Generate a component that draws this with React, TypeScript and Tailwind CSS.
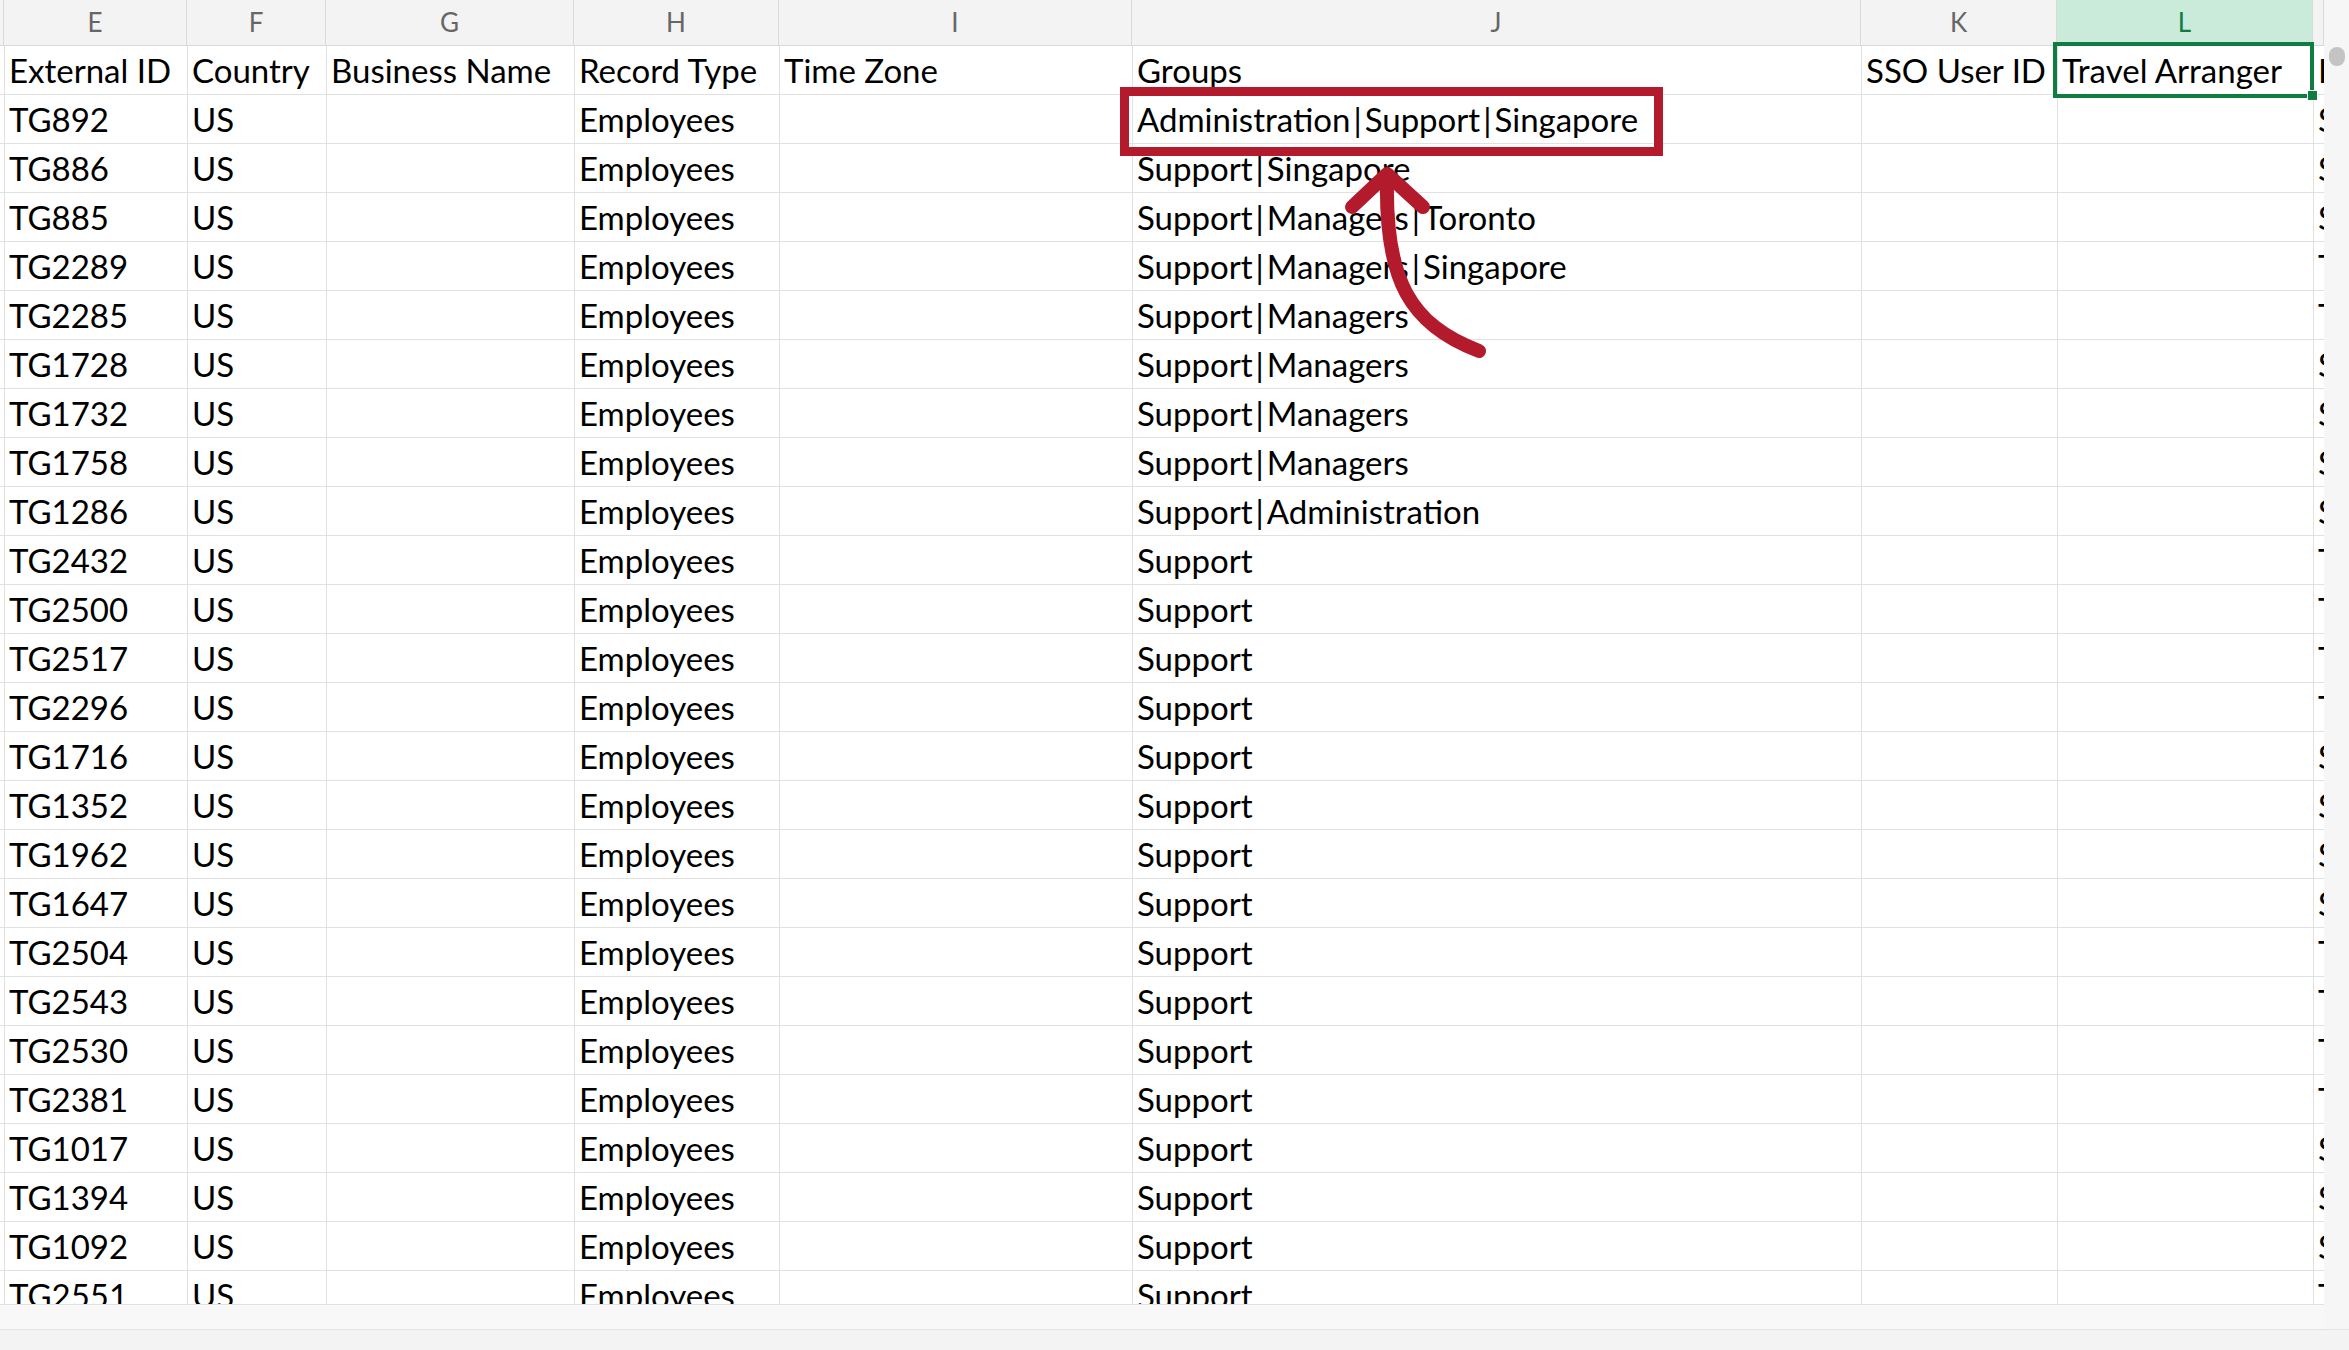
import { Fragment } from "react";

const cols = [
  { key: "D", w: "w-[4px]" },
  { key: "E", w: "w-[183px]" },
  { key: "F", w: "w-[139px]" },
  { key: "G", w: "w-[248px]" },
  { key: "H", w: "w-[205px]" },
  { key: "I", w: "w-[353px]" },
  { key: "J", w: "w-[729px]" },
  { key: "K", w: "w-[196px]" },
  { key: "L", w: "w-[256px]" },
  { key: "M", w: "w-[11px]" },
];

const names: Record<string, string> = {
  D: "",
  E: "External ID",
  F: "Country",
  G: "Business Name",
  H: "Record Type",
  I: "Time Zone",
  J: "Groups",
  K: "SSO User ID",
  L: "Travel Arranger",
  M: "Is",
};

// id, groups, first letter of the clipped M column
const rows: [string, string, string][] = [
  ["TG892", "Administration|Support|Singapore", "S"],
  ["TG886", "Support|Singapore", "S"],
  ["TG885", "Support|Managers|Toronto", "S"],
  ["TG2289", "Support|Managers|Singapore", "T"],
  ["TG2285", "Support|Managers", "T"],
  ["TG1728", "Support|Managers", "S"],
  ["TG1732", "Support|Managers", "S"],
  ["TG1758", "Support|Managers", "S"],
  ["TG1286", "Support|Administration", "S"],
  ["TG2432", "Support", "T"],
  ["TG2500", "Support", "T"],
  ["TG2517", "Support", "T"],
  ["TG2296", "Support", "T"],
  ["TG1716", "Support", "S"],
  ["TG1352", "Support", "S"],
  ["TG1962", "Support", "S"],
  ["TG1647", "Support", "S"],
  ["TG2504", "Support", "T"],
  ["TG2543", "Support", "T"],
  ["TG2530", "Support", "T"],
  ["TG2381", "Support", "T"],
  ["TG1017", "Support", "S"],
  ["TG1394", "Support", "S"],
  ["TG1092", "Support", "S"],
  ["TG2551", "Support", "T"],
];

// Calibri puts air around the pipe; Lato doesn't
function Piped({ text }: { text: string }) {
  const parts = text.split("|");
  return (
    <>
      {parts.map((p, i) => (
        <Fragment key={i}>
          {i > 0 && <span className="mx-[3px]">|</span>}
          {p}
        </Fragment>
      ))}
    </>
  );
}

function Row({ values }: { values: Record<string, string> }) {
  return (
    <div className="flex h-[49px] shrink-0 border-b border-[#e1e1e1]">
      {cols.map((c) => (
        <div
          key={c.key}
          className={`${c.w} shrink-0 overflow-hidden whitespace-nowrap border-r border-[#e1e1e1] pl-[4px] text-[33px] leading-[48px] text-black`}
        >
          {c.key === "J" ? <Piped text={values.J ?? ""} /> : values[c.key] ?? ""}
        </div>
      ))}
    </div>
  );
}

export default function App() {
  return (
    <div className="relative flex h-[1350px] w-[2349px] flex-col overflow-hidden bg-[#f3f3f3] font-['Lato',sans-serif]">
      <div className="flex h-[1330px] shrink-0 border-b border-[#e3e3e3] bg-[#f8f8f8]">
        <div className="flex w-[2324px] shrink-0 flex-col">
          {/* grid */}
          <div className="flex h-[1305px] shrink-0 flex-col overflow-hidden border-b border-[#e1e1e1] bg-white">
            {/* column letters */}
            <div className="flex h-[46px] shrink-0 border-b border-[#d9d9d9] bg-[#f3f3f3]">
              {cols.map((c) => (
                <div
                  key={c.key}
                  className={
                    c.key === "L"
                      ? `${c.w} shrink-0 border-r border-[#d9d9d9] bg-[#caeada] text-center text-[26px] leading-[45px] text-[#107c41]`
                      : `${c.w} shrink-0 border-r border-[#d9d9d9] text-center text-[26px] leading-[45px] text-[#666666]`
                  }
                >
                  {c.key === "D" || c.key === "M" ? "" : c.key}
                </div>
              ))}
            </div>
            <Row values={names} />
            {rows.map(([id, groups, m]) => (
              <Row
                key={id}
                values={{ E: id, F: "US", H: "Employees", J: groups, M: m }}
              />
            ))}
          </div>
          {/* horizontal scroll track */}
          <div className="flex-1 bg-[#f8f8f8]" />
        </div>
        {/* vertical scroll track */}
        <div className="flex flex-1 justify-center bg-[#f6f6f6] pt-[47px]">
          <div className="h-[19px] w-[16px] rounded-full bg-[#c4c4c4]" />
        </div>
      </div>
      <div className="flex-1 bg-[#f3f3f3]" />

      {/* selected cell L1 */}
      <div className="absolute left-[2053px] top-[42px] h-[56px] w-[261px] border-[4px] border-[#107c41]" />
      <div className="absolute left-[2307px] top-[90px] h-[11px] w-[11px] border border-white bg-[#107c41]" />

      {/* annotation */}
      <div className="absolute left-[1120px] top-[87px] h-[69px] w-[543px] border-[9px] border-[#b31b2d]" />
      <svg
        className="absolute left-0 top-0"
        width="2349"
        height="1350"
        viewBox="0 0 2349 1350"
        fill="none"
      >
        <path
          d="M1479 351 C1410 325 1385 280 1387 180"
          stroke="#b31b2d"
          strokeWidth="14"
          strokeLinecap="round"
        />
        <path
          d="M1352 207 L1387 174 L1423 207"
          stroke="#b31b2d"
          strokeWidth="14"
          strokeLinecap="round"
          strokeLinejoin="round"
        />
      </svg>
    </div>
  );
}
